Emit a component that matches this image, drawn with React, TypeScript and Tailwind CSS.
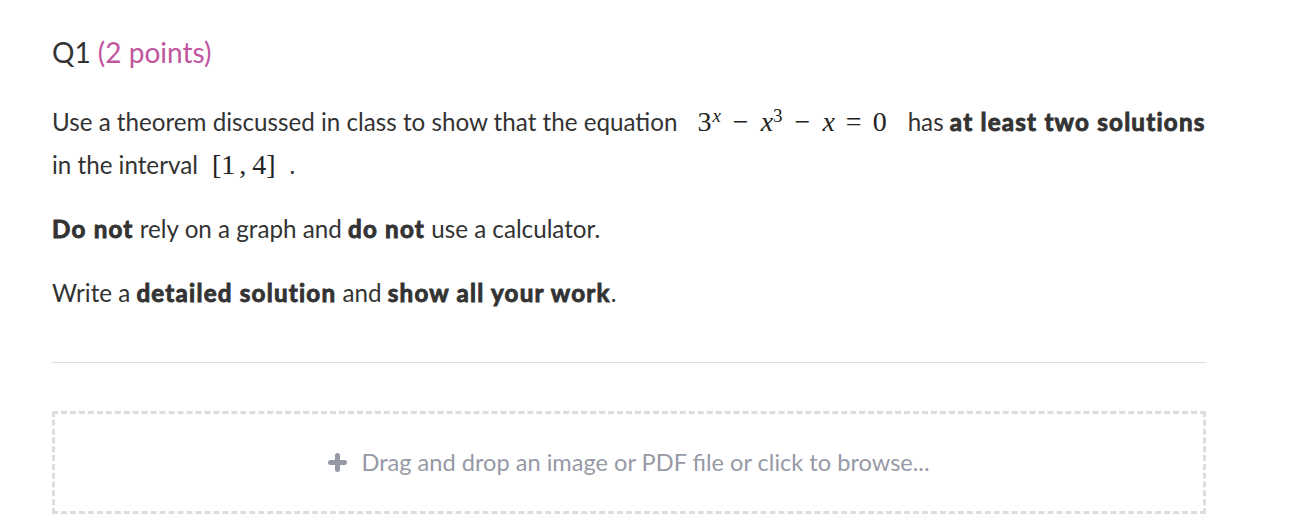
import React from "react";

const serif = { fontFamily: '"Liberation Serif", "DejaVu Serif", serif' };

const B: React.FC<{ children: React.ReactNode }> = ({ children }) => (
  <b className="font-bold tracking-[0.05em] [-webkit-text-stroke:0.9px_#333]">{children}</b>
);

export default function App() {
  return (
    <div className="min-h-[526px] bg-white text-[#333]" style={{ fontFamily: 'Lato, "Open Sans", sans-serif' }}>
      <div className="w-[1154px] ml-[52px] pt-[32px]">
        <h2 className="text-[28px] leading-[40px] text-[#333]">
          Q1 <span className="text-[#c1569f]">(2 points)</span>
        </h2>
        <p className="mt-[28px] text-[24.2px] leading-[43px]">
          Use a theorem discussed in class to show that the equation
          <span className="inline-block ml-[20px] mr-[21px] text-[28px] text-[#222]" style={serif}>
            3<sup className="italic text-[19px] ml-[1px]">x</sup>
            <span className="mx-[12px]">−</span>
            <i>x</i><sup className="text-[19px]">3</sup>
            <span className="mx-[12px]">−</span>
            <i>x</i>
            <span className="mx-[11px]">=</span>0
          </span>
          has <B>at least two solutions</B> in the interval
          <span className="inline-block mx-[14px] text-[28px] text-[#222]" style={serif}>
            [1<span className="ml-[4px] mr-[6px]">,</span>4]
          </span>.
        </p>
        <p className="mt-[21px] text-[24.2px] leading-[43px]">
          <B>Do not</B> rely on a graph and <B>do not</B> use a calculator.
        </p>
        <p className="mt-[21px] text-[24.2px] leading-[43px]">
          Write a <B>detailed solution</B> and <B>show all your work</B>.
        </p>
        <hr className="mt-[48px] border-t border-[#ddd]" />
        <div className="mt-[48px] h-[103px] border-[3px] border-dashed border-[#ddd] flex items-center justify-center text-[23.6px] text-[#979aa6]">
          <svg width="19" height="19" viewBox="0 0 19 19" className="mr-[14px]">
            <path d="M9.5 2.5v14M2.5 9.5h14" stroke="#979aa6" strokeWidth="5" strokeLinecap="round" />
          </svg>
          Drag and drop an image or PDF file or click to browse...
        </div>
      </div>
    </div>
  );
}
